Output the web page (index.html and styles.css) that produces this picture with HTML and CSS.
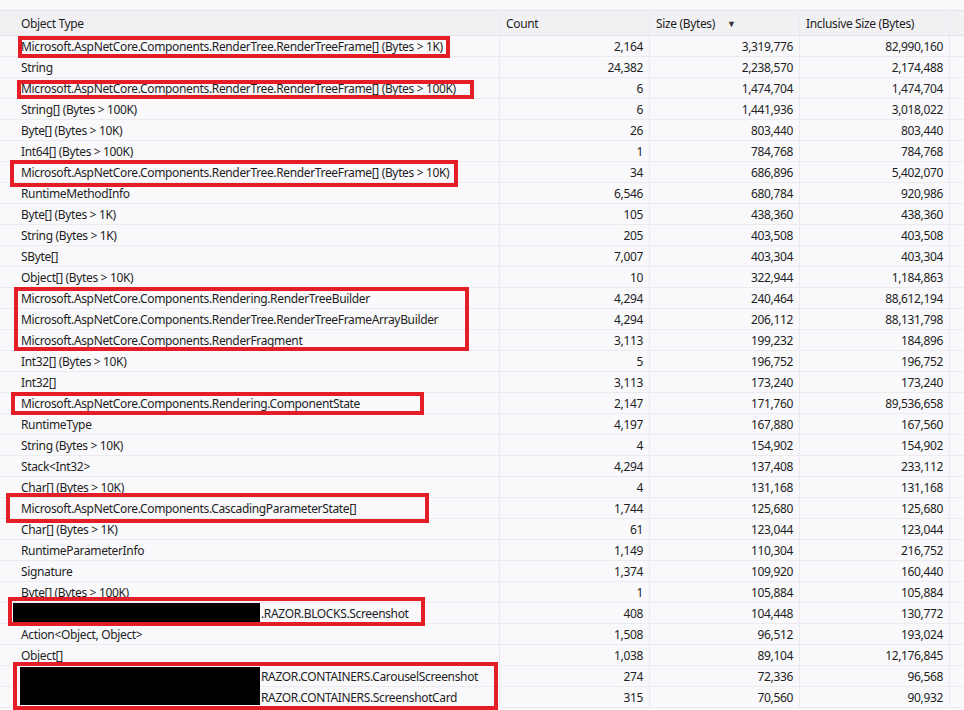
FILE: index.html
```html
<!DOCTYPE html>
<html>
<head>
<meta charset="utf-8">
<link rel="stylesheet" href="styles.css">
</head>
<body>
<div class="page">
  <div class="topstrip"></div>
  <div class="grid">
    <div class="row head">
      <div class="c name">Object Type</div>
      <div class="c">Count</div>
      <div class="c">Size (Bytes) <span class="sort">▼</span></div>
      <div class="c">Inclusive Size (Bytes)</div>
      <div class="c end"></div>
    </div>
    <div class="row"><div class="c name">Microsoft.AspNetCore.Components.RenderTree.RenderTreeFrame[] (Bytes &gt; 1K)</div><div class="c n">2,164</div><div class="c n">3,319,776</div><div class="c n">82,990,160</div><div class="c end"></div></div>
    <div class="row"><div class="c name">String</div><div class="c n">24,382</div><div class="c n">2,238,570</div><div class="c n">2,174,488</div><div class="c end"></div></div>
    <div class="row"><div class="c name">Microsoft.AspNetCore.Components.RenderTree.RenderTreeFrame[] (Bytes &gt; 100K)</div><div class="c n">6</div><div class="c n">1,474,704</div><div class="c n">1,474,704</div><div class="c end"></div></div>
    <div class="row"><div class="c name">String[] (Bytes &gt; 100K)</div><div class="c n">6</div><div class="c n">1,441,936</div><div class="c n">3,018,022</div><div class="c end"></div></div>
    <div class="row"><div class="c name">Byte[] (Bytes &gt; 10K)</div><div class="c n">26</div><div class="c n">803,440</div><div class="c n">803,440</div><div class="c end"></div></div>
    <div class="row"><div class="c name">Int64[] (Bytes &gt; 100K)</div><div class="c n">1</div><div class="c n">784,768</div><div class="c n">784,768</div><div class="c end"></div></div>
    <div class="row"><div class="c name">Microsoft.AspNetCore.Components.RenderTree.RenderTreeFrame[] (Bytes &gt; 10K)</div><div class="c n">34</div><div class="c n">686,896</div><div class="c n">5,402,070</div><div class="c end"></div></div>
    <div class="row"><div class="c name">RuntimeMethodInfo</div><div class="c n">6,546</div><div class="c n">680,784</div><div class="c n">920,986</div><div class="c end"></div></div>
    <div class="row"><div class="c name">Byte[] (Bytes &gt; 1K)</div><div class="c n">105</div><div class="c n">438,360</div><div class="c n">438,360</div><div class="c end"></div></div>
    <div class="row"><div class="c name">String (Bytes &gt; 1K)</div><div class="c n">205</div><div class="c n">403,508</div><div class="c n">403,508</div><div class="c end"></div></div>
    <div class="row"><div class="c name">SByte[]</div><div class="c n">7,007</div><div class="c n">403,304</div><div class="c n">403,304</div><div class="c end"></div></div>
    <div class="row"><div class="c name">Object[] (Bytes &gt; 10K)</div><div class="c n">10</div><div class="c n">322,944</div><div class="c n">1,184,863</div><div class="c end"></div></div>
    <div class="row"><div class="c name">Microsoft.AspNetCore.Components.Rendering.RenderTreeBuilder</div><div class="c n">4,294</div><div class="c n">240,464</div><div class="c n">88,612,194</div><div class="c end"></div></div>
    <div class="row"><div class="c name">Microsoft.AspNetCore.Components.RenderTree.RenderTreeFrameArrayBuilder</div><div class="c n">4,294</div><div class="c n">206,112</div><div class="c n">88,131,798</div><div class="c end"></div></div>
    <div class="row"><div class="c name">Microsoft.AspNetCore.Components.RenderFragment</div><div class="c n">3,113</div><div class="c n">199,232</div><div class="c n">184,896</div><div class="c end"></div></div>
    <div class="row"><div class="c name">Int32[] (Bytes &gt; 10K)</div><div class="c n">5</div><div class="c n">196,752</div><div class="c n">196,752</div><div class="c end"></div></div>
    <div class="row"><div class="c name">Int32[]</div><div class="c n">3,113</div><div class="c n">173,240</div><div class="c n">173,240</div><div class="c end"></div></div>
    <div class="row"><div class="c name">Microsoft.AspNetCore.Components.Rendering.ComponentState</div><div class="c n">2,147</div><div class="c n">171,760</div><div class="c n">89,536,658</div><div class="c end"></div></div>
    <div class="row"><div class="c name">RuntimeType</div><div class="c n">4,197</div><div class="c n">167,880</div><div class="c n">167,560</div><div class="c end"></div></div>
    <div class="row"><div class="c name">String (Bytes &gt; 10K)</div><div class="c n">4</div><div class="c n">154,902</div><div class="c n">154,902</div><div class="c end"></div></div>
    <div class="row"><div class="c name">Stack&lt;Int32&gt;</div><div class="c n">4,294</div><div class="c n">137,408</div><div class="c n">233,112</div><div class="c end"></div></div>
    <div class="row"><div class="c name">Char[] (Bytes &gt; 10K)</div><div class="c n">4</div><div class="c n">131,168</div><div class="c n">131,168</div><div class="c end"></div></div>
    <div class="row"><div class="c name">Microsoft.AspNetCore.Components.CascadingParameterState[]</div><div class="c n">1,744</div><div class="c n">125,680</div><div class="c n">125,680</div><div class="c end"></div></div>
    <div class="row"><div class="c name">Char[] (Bytes &gt; 1K)</div><div class="c n">61</div><div class="c n">123,044</div><div class="c n">123,044</div><div class="c end"></div></div>
    <div class="row"><div class="c name">RuntimeParameterInfo</div><div class="c n">1,149</div><div class="c n">110,304</div><div class="c n">216,752</div><div class="c end"></div></div>
    <div class="row"><div class="c name">Signature</div><div class="c n">1,374</div><div class="c n">109,920</div><div class="c n">160,440</div><div class="c end"></div></div>
    <div class="row"><div class="c name">Byte[] (Bytes &gt; 100K)</div><div class="c n">1</div><div class="c n">105,884</div><div class="c n">105,884</div><div class="c end"></div></div>
    <div class="row"><div class="c name"><span class="hidden"></span>.RAZOR.BLOCKS.Screenshot</div><div class="c n">408</div><div class="c n">104,448</div><div class="c n">130,772</div><div class="c end"></div></div>
    <div class="row"><div class="c name">Action&lt;Object, Object&gt;</div><div class="c n">1,508</div><div class="c n">96,512</div><div class="c n">193,024</div><div class="c end"></div></div>
    <div class="row"><div class="c name">Object[]</div><div class="c n">1,038</div><div class="c n">89,104</div><div class="c n">12,176,845</div><div class="c end"></div></div>
    <div class="row"><div class="c name"><span class="hidden"></span>RAZOR.CONTAINERS.CarouselScreenshot</div><div class="c n">274</div><div class="c n">72,336</div><div class="c n">96,568</div><div class="c end"></div></div>
    <div class="row"><div class="c name"><span class="hidden"></span>RAZOR.CONTAINERS.ScreenshotCard</div><div class="c n">315</div><div class="c n">70,560</div><div class="c n">90,932</div><div class="c end"></div></div>
  </div>

  <div class="mark" style="left:18px;top:36px;width:432px;height:22px"></div>
  <div class="mark" style="left:17px;top:80px;width:457px;height:19px"></div>
  <div class="mark" style="left:10px;top:160px;width:448px;height:27px"></div>
  <div class="mark" style="left:14px;top:287px;width:455px;height:64px"></div>
  <div class="mark" style="left:11px;top:392px;width:413px;height:23px"></div>
  <div class="mark" style="left:6px;top:493px;width:423px;height:30px"></div>
  <div class="mark" style="left:8px;top:597px;width:417px;height:29px"></div>
  <div class="mark" style="left:13px;top:662px;width:485px;height:48px"></div>
  <div class="redact" style="left:13px;top:603px;width:247px;height:19px"></div>
  <div class="redact" style="left:20px;top:667px;width:240px;height:38px"></div>
</div>
</body>
</html>
```
FILE: styles.css
```css
html, body {
  margin: 0;
  padding: 0;
  background: #f9f9fb;
}
.page {
  position: relative;
  width: 964px;
  height: 710px;
  overflow: hidden;
  font-family: "Segoe UI", "Noto Sans", "Open Sans", sans-serif;
  font-size: 12px;
  letter-spacing: -0.35px;
  color: #1e1e1e;
}
.topstrip {
  height: 10px;
  background: #f9f9fb;
  border-bottom: 1px solid #e6e6ea;
}
.grid {
  display: flex;
  flex-direction: column;
}
.row {
  display: grid;
  grid-template-columns: 500px 150px 150px 150px 14px;
  height: 21px;
  background: #f9f9fb;
  border-bottom: 1px solid #ececf0;
  box-sizing: border-box;
}
.row.head {
  height: 25px;
  background: #f1f1f4;
  border-bottom: 1px solid #e2e2e6;
}
.c {
  display: flex;
  align-items: center;
  padding: 0 6px;
  border-right: 1px solid #ebebef;
  white-space: nowrap;
  overflow: hidden;
  box-sizing: border-box;
}
.c.name {
  padding-left: 21px;
}
.row .c.n {
  justify-content: flex-end;
}
.head .c {
  padding-left: 6px;
  padding-top: 1px;
}
.head .c.name {
  padding-left: 21px;
}
.c.end {
  border-right: none;
}
.sort {
  font-size: 9px;
  margin-left: 12px;
  color: #333;
}
.hidden {
  display: inline-block;
  width: 240px;
}
.mark {
  position: absolute;
  border: 4px solid #e41d26;
  box-sizing: border-box;
}
.redact {
  position: absolute;
  background: #000;
}
```
